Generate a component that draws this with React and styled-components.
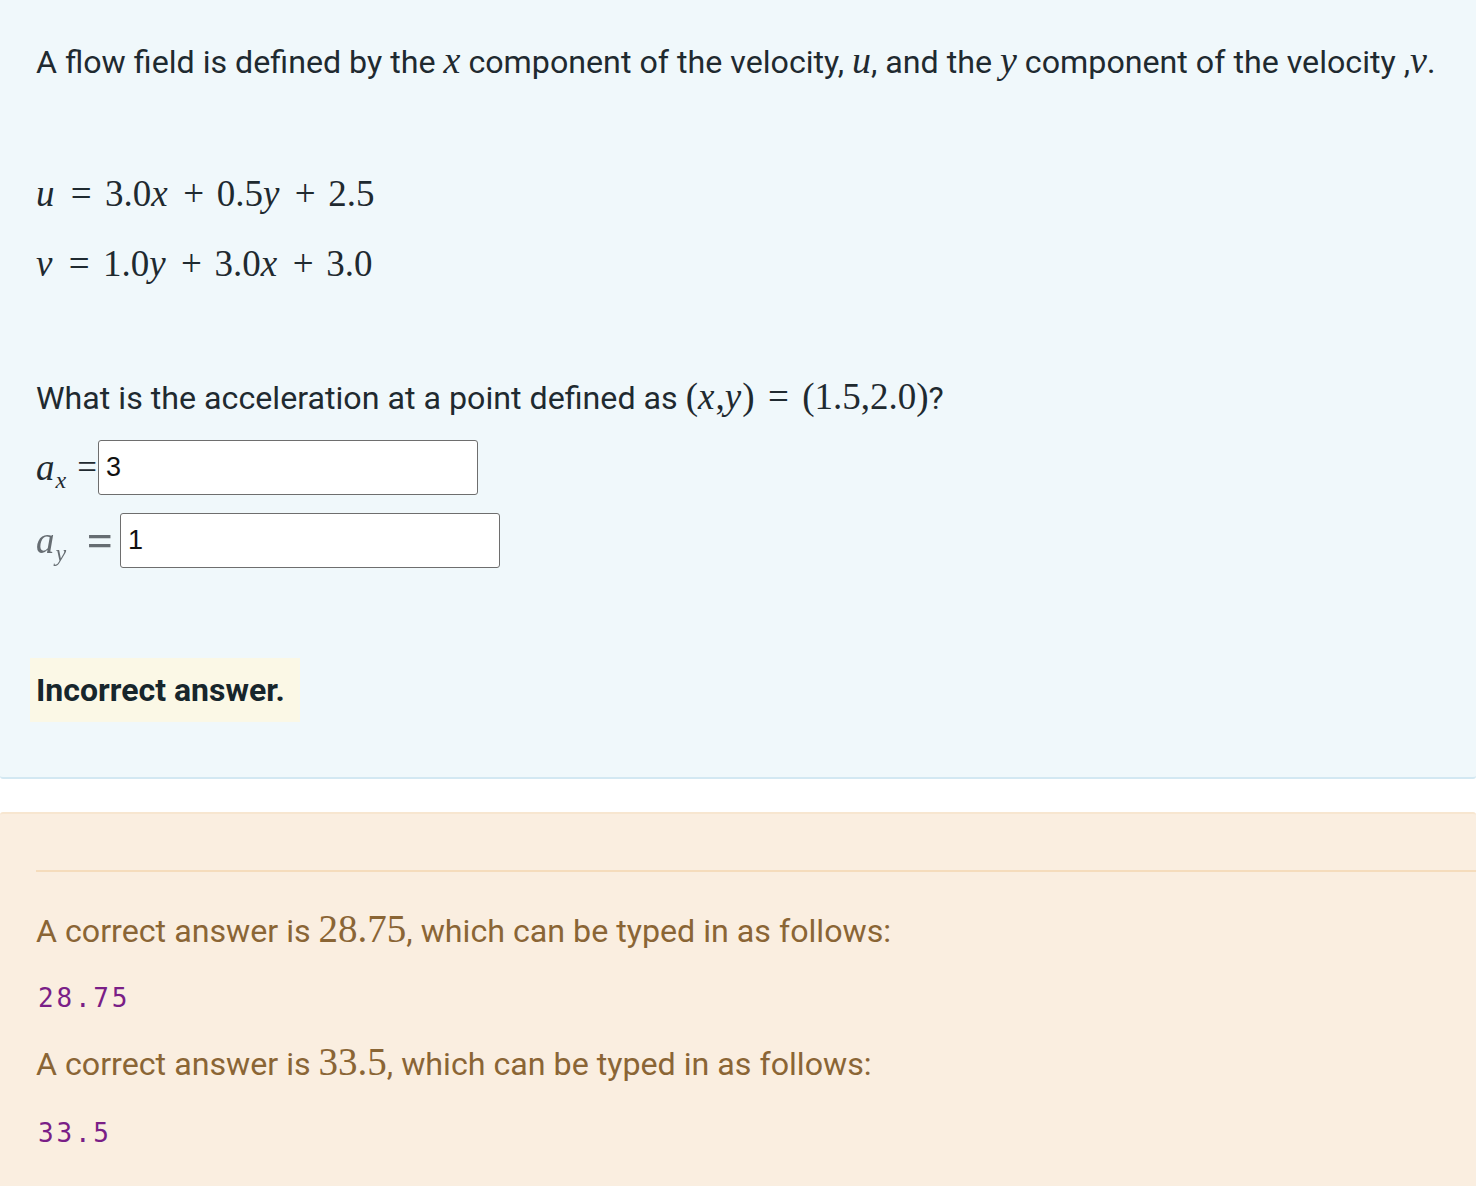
import React from 'react'
import styled, { createGlobalStyle } from 'styled-components'

const Global = createGlobalStyle`
  html, body { margin: 0; padding: 0; background: #fff; }
  body { font-family: Roboto, "Liberation Sans", sans-serif; }
`

const Page = styled.div`
  width: 1476px;
  height: 1186px;
  overflow: hidden;
  display: flex;
  flex-direction: column;
  gap: 33px;
`

const Question = styled.section`
  flex: none;
  background: #f0f8fb;
  border-bottom: 2px solid #d3e8f2;
  border-radius: 0 0 3px 3px;
  padding: 38px 0 0 36px;
  height: 779px;
  box-sizing: border-box;
  color: #1f2a30;
  font-size: 32.2px;
`

const Para = styled.p`
  margin: 0;
  line-height: 44px;
`

const M = styled.span`
  font-family: "Liberation Serif", "DejaVu Serif", serif;
  font-style: ${({ up }) => (up ? 'normal' : 'italic')};
  font-size: ${({ up }) => (up ? '37px' : '38px')};
`

const Equations = styled.div`
  margin-top: 88px;
  display: flex;
  flex-direction: column;
  gap: 26px;
  font-family: "Liberation Serif", "DejaVu Serif", serif;
  font-size: 37px;
  line-height: 44px;
`

const I = styled.i`
  font-style: italic;
  margin-right: ${({ tight }) => (tight ? '0.03em' : '0.08em')};
`

const Op = styled.span`
  margin: 0 ${({ wide }) => (wide ? '0.36em' : '0.34em')};
`

const Ask = styled(Para)`
  margin-top: 89px;
`

const AnswerRow = styled.div`
  display: flex;
  align-items: center;
  margin-top: ${({ top }) => top}px;
`

const Label = styled.div`
  display: flex;
  align-items: center;
  width: ${({ w }) => w}px;
  font-family: "Liberation Serif", "DejaVu Serif", serif;
  color: ${({ faded }) => (faded ? '#666d72' : '#1f2a30')};
  filter: ${({ faded }) => (faded ? 'blur(0.6px)' : 'none')};
`

const Sym = styled.span`
  font-size: 37px;
  font-style: italic;
  line-height: 1;
  sub {
    font-size: 24px;
    vertical-align: -8px;
    line-height: 0;
    margin-left: 1px;
  }
`

const Eq = styled.span`
  margin-left: auto;
  margin-right: ${({ faded }) => (faded ? '7px' : '1px')};
  font-size: ${({ faded }) => (faded ? '46px' : '35px')};
  font-weight: ${({ faded }) => (faded ? 700 : 400)};
  line-height: 1;
`

const Field = styled.div`
  width: 380px;
  height: 55px;
  box-sizing: border-box;
  border: 1.5px solid #6e6e6e;
  border-radius: 3px;
  background: #fff;
  padding: 0 7px;
  display: flex;
  align-items: center;
  font-family: "Liberation Sans", Arial, sans-serif;
  font-size: 27px;
  color: #111;
`

const Feedback = styled.div`
  display: inline-block;
  margin: 90px 0 0 -6px;
  background: #fbf8e6;
  padding: 10px 15px 10px 6px;
  font-weight: 700;
  font-size: 32px;
  line-height: 44px;
  color: #17262c;
`

const Solution = styled.section`
  flex: 1;
  background: #faeee0;
  border-top: 2px solid #f7e6d0;
  border-radius: 3px 3px 0 0;
  padding: 56px 0 0 36px;
  color: #8a6535;
  font-size: 32.2px;
`

const Rule = styled.hr`
  margin: 0 0 35px;
  border: none;
  border-top: 2px solid #f5dcbc;
`

const Correct = styled.p`
  margin: ${({ top }) => top || 0}px 0 0;
  line-height: 44px;
`

const Num = styled.span`
  font-family: "Liberation Serif", "DejaVu Serif", serif;
  font-size: 39px;
`

const Code = styled.code`
  display: block;
  margin: ${({ top }) => top}px 0 0 2px;
  font-family: "DejaVu Sans Mono", monospace;
  font-size: 26px;
  line-height: 34px;
  color: #7a1e87;
  letter-spacing: 2.8px;
`

export default function App() {
  return (
    <Page>
      <Global />
      <Question>
        <Para>
          A flow field is defined by the <M>x</M> component of the velocity, <M>u</M>, and the <M>y</M> component of the velocity ,<M>v</M>.
        </Para>
        <Equations>
          <div><I>u</I><Op wide>=</Op>3.0<I>x</I><Op>+</Op>0.5<I>y</I><Op>+</Op>2.5</div>
          <div><I>v</I><Op wide>=</Op>1.0<I>y</I><Op>+</Op>3.0<I>x</I><Op>+</Op>3.0</div>
        </Equations>
        <Ask>
          What is the acceleration at a point defined as <M up>(<I tight>x</I>,<I tight>y</I>)<Op wide>=</Op>(1.5,2.0)</M>?
        </Ask>
        <AnswerRow top={20}>
          <Label w={62}><Sym>a<sub>x</sub></Sym><Eq>=</Eq></Label>
          <Field>3</Field>
        </AnswerRow>
        <AnswerRow top={18}>
          <Label w={84} faded><Sym>a<sub>y</sub></Sym><Eq faded>=</Eq></Label>
          <Field>1</Field>
        </AnswerRow>
        <Feedback>Incorrect answer.</Feedback>
      </Question>
      <Solution>
        <Rule />
        <Correct>A correct answer is <Num>28.75</Num>, which can be typed in as follows:</Correct>
        <Code top={28}>28.75</Code>
        <Correct top={25}>A correct answer is <Num>33.5</Num>, which can be typed in as follows:</Correct>
        <Code top={30}>33.5</Code>
      </Solution>
    </Page>
  )
}
